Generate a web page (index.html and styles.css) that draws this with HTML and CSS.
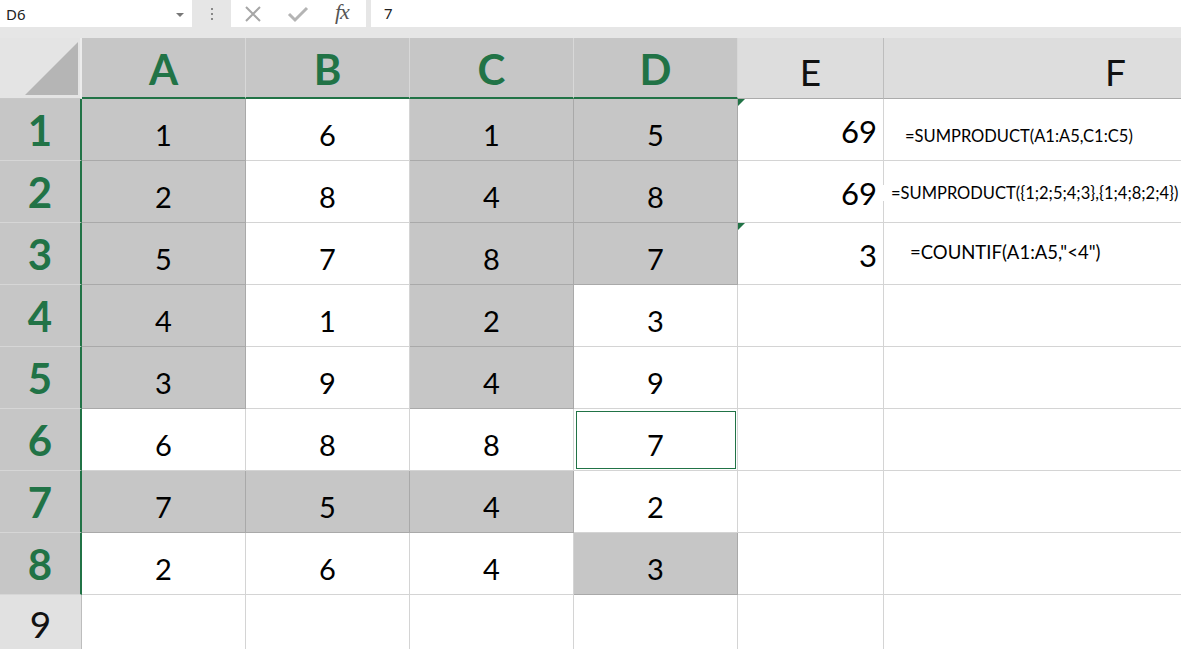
FILE: index.html
```html
<!DOCTYPE html>
<html lang="en">
<head>
    <meta charset="UTF-8">
    <title>SUMPRODUCT</title>
    <link rel="stylesheet" href="styles.css">
</head>
<body>

<div class="formula-bar">
    <div class="name-box">
        <span>D6</span>
        <span class="drop"></span>
    </div>
    <div class="grip">
        <i></i><i></i><i></i>
    </div>
    <div class="fx-buttons">
        <svg class="btn-x" width="18" height="18" viewBox="0 0 18 18">
            <path d="M2 2 L16 16 M16 2 L2 16" stroke="#a6a6a6" stroke-width="2" fill="none"/>
        </svg>
        <svg class="btn-ok" width="22" height="18" viewBox="0 0 22 18">
            <path d="M2 9 L8 15 L20 3" stroke="#b4b4b4" stroke-width="3" fill="none"/>
        </svg>
        <span class="fx-label">fx</span>
    </div>
    <div class="formula-input">7</div>
</div>

<div class="sheet-wrap">
<div class="sheet">
    <!-- header row -->
    <div class="corner">
        <svg width="80" height="60" viewBox="0 0 80 60">
            <polygon points="25,57 78,4 78,57" fill="#b5b5b5"/>
        </svg>
    </div>
    <div class="col-head sel">A</div>
    <div class="col-head sel">B</div>
    <div class="col-head sel">C</div>
    <div class="col-head sel">D</div>
    <div class="col-head">E</div>
    <div class="col-head">F</div>

    <!-- 1 -->
    <div class="row-head sel">1</div>
    <div class="cell grey">1</div>
    <div class="cell">6</div>
    <div class="cell grey">1</div>
    <div class="cell grey">5</div>
    <div class="cell num err">69</div>
    <div class="cell text r1">=SUMPRODUCT(A1:A5,C1:C5)</div>

    <!-- 2 -->
    <div class="row-head sel">2</div>
    <div class="cell grey">2</div>
    <div class="cell">8</div>
    <div class="cell grey">4</div>
    <div class="cell grey">8</div>
    <div class="cell num">69</div>
    <div class="cell text r2"><span class="spill">=SUMPRODUCT({1;2;5;4;3},{1;4;8;2;4})</span></div>

    <!-- 3 -->
    <div class="row-head sel">3</div>
    <div class="cell grey">5</div>
    <div class="cell">7</div>
    <div class="cell grey">8</div>
    <div class="cell grey">7</div>
    <div class="cell num err">3</div>
    <div class="cell text r3">=COUNTIF(A1:A5,"&lt;4")</div>

    <!-- 4 -->
    <div class="row-head sel">4</div>
    <div class="cell grey">4</div>
    <div class="cell">1</div>
    <div class="cell grey">2</div>
    <div class="cell">3</div>
    <div class="cell"></div>
    <div class="cell"></div>

    <!-- 5 -->
    <div class="row-head sel">5</div>
    <div class="cell grey">3</div>
    <div class="cell">9</div>
    <div class="cell grey">4</div>
    <div class="cell">9</div>
    <div class="cell"></div>
    <div class="cell"></div>

    <!-- 6 -->
    <div class="row-head sel">6</div>
    <div class="cell">6</div>
    <div class="cell">8</div>
    <div class="cell">8</div>
    <div class="cell active">7</div>
    <div class="cell"></div>
    <div class="cell"></div>

    <!-- 7 -->
    <div class="row-head sel">7</div>
    <div class="cell grey">7</div>
    <div class="cell grey">5</div>
    <div class="cell grey">4</div>
    <div class="cell">2</div>
    <div class="cell"></div>
    <div class="cell"></div>

    <!-- 8 -->
    <div class="row-head sel">8</div>
    <div class="cell">2</div>
    <div class="cell">6</div>
    <div class="cell">4</div>
    <div class="cell grey">3</div>
    <div class="cell"></div>
    <div class="cell"></div>

    <!-- 9 -->
    <div class="row-head">9</div>
    <div class="cell"></div>
    <div class="cell"></div>
    <div class="cell"></div>
    <div class="cell"></div>
    <div class="cell"></div>
    <div class="cell"></div>
</div>
</div>

</body>
</html>
```

FILE: styles.css
```css
body {
    margin: 0;
    width: 1181px;
    height: 649px;
    overflow: hidden;
    background-color: #e6e6e6;
    font-family: Lato, "Open Sans", sans-serif;
}

/* formula bar */

.formula-bar {
    display: flex;
    height: 28px;
    font-family: "Noto Sans", sans-serif;
    font-size: 15px;
    color: #222;
}

.name-box {
    width: 192px;
    height: 27px;
    background: #fff;
    display: flex;
    align-items: center;
    justify-content: space-between;
    padding: 0 8px 0 6px;
    box-sizing: border-box;
}

.drop {
    width: 0;
    height: 0;
    border-left: 4px solid transparent;
    border-right: 4px solid transparent;
    border-top: 4px solid #777;
    margin-top: 2px;
}

.grip {
    width: 39px;
    display: flex;
    flex-direction: column;
    align-items: center;
    justify-content: center;
    gap: 3px;
    height: 27px;
}

.grip i {
    width: 2px;
    height: 2px;
    background: #888;
}

.fx-buttons {
    width: 135px;
    height: 27px;
    background: #fff;
    display: flex;
    align-items: center;
    padding-left: 13px;
    box-sizing: border-box;
}

.btn-x {
    margin-right: 25px;
}

.btn-ok {
    margin-right: 26px;
}

.fx-label {
    font-family: "Liberation Serif", serif;
    font-style: italic;
    font-size: 22px;
    color: #555;
    letter-spacing: -1px;
    margin-top: -4px;
}

.formula-input {
    flex: 1;
    margin-left: 5px;
    height: 27px;
    background: #fff;
    padding-left: 13px;
    line-height: 27px;
}

/* sheet */

.sheet-wrap {
    margin-top: 10px;
    overflow: hidden;
}

.sheet {
    display: grid;
    grid-template-columns: 82px 164px 164px 164px 164px 146px 464px;
    grid-template-rows: 61px;
    grid-auto-rows: 62px;
    width: 1348px;
    background: #fff;
}

.corner {
    background: #e4e4e4;
    border-bottom: 1px solid #c8c8c8;
    border-right: 2px solid #ececec;
    box-sizing: border-box;
}

.corner svg {
    display: block;
}

.col-head, .row-head {
    display: flex;
    justify-content: center;
    align-items: flex-end;
    line-height: 1;
    box-sizing: border-box;
    font-size: 37px;
    color: #111;
}

.col-head {
    background: #dddddd;
    border-right: 1px solid #bdbdbd;
    border-bottom: 1px solid #ababab;
    padding-bottom: 8px;
}

.col-head.sel {
    background: #c6c6c6;
    border-right-color: #d8d8d8;
    border-bottom: 2px solid #217346;
    color: #217346;
    font-weight: bold;
    font-size: 42px;
    padding-bottom: 7px;
}

.row-head {
    background: #e1e1e1;
    border-right: 1px solid #bdbdbd;
    border-bottom: 1px solid #c8c8c8;
    padding-bottom: 14px;
}

.row-head.sel {
    background: #c6c6c6;
    border-right: 2px solid #217346;
    border-bottom-color: #d6d6d6;
    color: #217346;
    font-weight: bold;
    font-size: 42px;
    padding-bottom: 9px;
}

.cell {
    position: relative;
    display: flex;
    justify-content: center;
    align-items: flex-end;
    border-right: 1px solid #d4d4d4;
    border-bottom: 1px solid #d4d4d4;
    box-sizing: border-box;
    font-size: 29px;
    line-height: 1;
    color: #000;
    padding-bottom: 11px;
}

.cell.grey {
    background: #c6c6c6;
    border-color: #a9a9a9;
}

.cell.active {
    outline: 1px solid #217346;
    outline-offset: -3px;
}

.cell.num {
    justify-content: flex-end;
    font-size: 31px;
    padding-right: 6px;
    padding-bottom: 13px;
}

.cell.err::before {
    content: "";
    position: absolute;
    top: 0;
    left: 0;
    border-top: 7px solid #217346;
    border-right: 7px solid transparent;
}

.cell.text {
    justify-content: flex-start;
    font-size: 16.5px;
    white-space: nowrap;
    overflow: visible;
}

.cell.r1 {
    padding-left: 21px;
    padding-bottom: 16px;
}

.cell.r2 {
    padding-left: 0;
    padding-bottom: 21px;
}

.cell.r3 {
    padding-left: 26px;
    padding-bottom: 23px;
    font-size: 18.5px;
}

.spill {
    background: #fff;
    margin-left: -2px;
    padding-left: 9px;
}
```
